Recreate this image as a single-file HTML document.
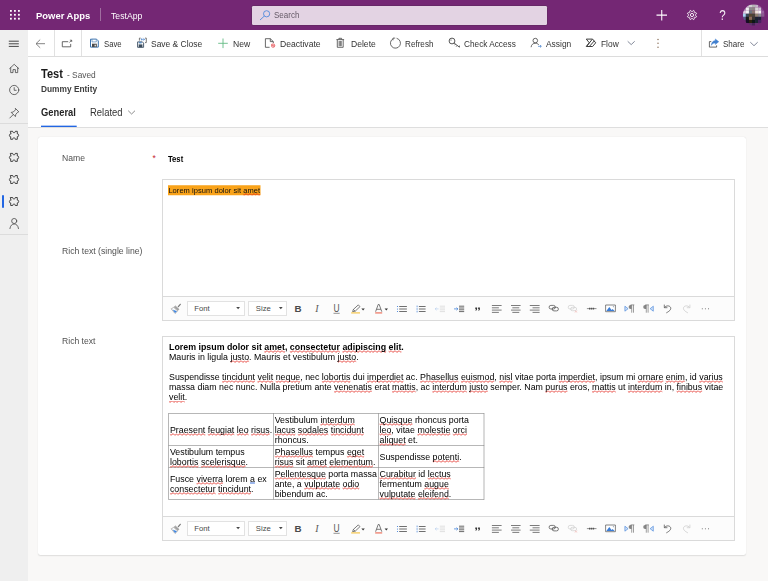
<!DOCTYPE html>
<html lang="en"><head><meta charset="utf-8"><title>Test - Power Apps</title>
<style>
html,body{margin:0;padding:0;}
body{width:768px;height:581px;overflow:hidden;position:relative;background:#f9f8f7;font-family:"Liberation Sans",sans-serif;}
.abs{position:absolute;}
.tx{position:absolute;white-space:pre;transform-origin:0 50%;}
svg{position:absolute;overflow:visible;}
#top{position:absolute;left:0;top:0;width:768px;height:30px;background:#742774;}
#searchbox{position:absolute;left:251.6px;top:5.5px;width:295.5px;height:19.1px;background:#e3d3e3;border-radius:1.2px;box-shadow:0 0 0 0.5px rgba(70,40,70,.55);}
#side{position:absolute;left:0;top:30px;width:27.6px;height:551px;background:#efefef;}
#cmd{position:absolute;left:27.6px;top:30px;width:740.4px;height:26.2px;background:#fff;border-bottom:0.7px solid #dcdcdc;}
.vd{position:absolute;top:30px;height:26.2px;width:0.7px;background:#e1e1e1;}
#hdr{position:absolute;left:27.6px;top:56.9px;width:740.4px;height:70.3px;background:#fff;border-bottom:0.7px solid #dedede;}
#card{position:absolute;left:37.5px;top:137px;width:708.8px;height:418px;background:#fff;border-radius:2.5px;box-shadow:0 0.4px 1.4px rgba(0,0,0,.11),0 0 0.6px rgba(0,0,0,.07);}
.ed{position:absolute;left:162px;width:573px;border:1px solid #dadada;background:#fff;box-sizing:border-box;}
.tb{position:absolute;left:0;bottom:0;width:100%;height:24px;background:#fcfcfc;border-top:1px solid #dadada;box-sizing:border-box;}
.combo{position:absolute;top:4px;height:15px;box-sizing:border-box;border:1px solid #e2e2e2;background:#fff;font-size:7.7px;line-height:13px;color:#484848;}
.xk{transform:scale(0.25000);transform-origin:0 0;}
.rt{font-family:"Liberation Sans",sans-serif;font-size:35.36px;line-height:40.24px;color:#000;white-space:nowrap;}
.rt p{margin:0;}
.rt table{border-collapse:collapse;margin:0;table-layout:fixed;}
.rt td{border:2.6px solid #6e6e6e;padding:4.08px 2.52px 1.08px 4.12px;vertical-align:middle;}
.sq{text-decoration:underline wavy #e01b10;text-decoration-thickness:3.49px;text-underline-offset:2px;text-decoration-skip-ink:none;}
.gq{text-decoration:underline double #3b6fd9;text-decoration-thickness:2px;text-underline-offset:3.2px;text-decoration-skip-ink:none;}

#pa{left:35.8px;top:10.33px;font-size:9.7px;line-height:12.61px;font-weight:700;color:#fff;transform:scaleX(0.9744);}
#ta{left:110.7px;top:11.43px;font-size:8.6px;line-height:11.18px;font-weight:400;color:#fff;transform:scaleX(1.0076);}
#se{left:274.2px;top:10.43px;font-size:8.6px;line-height:11.18px;font-weight:400;color:#655a67;transform:scaleX(0.9363);}
#c1{left:103.7px;top:39.43px;font-size:8.6px;line-height:11.18px;font-weight:400;color:#333;transform:scaleX(0.8982);}
#c2{left:151.3px;top:39.43px;font-size:8.6px;line-height:11.18px;font-weight:400;color:#333;transform:scaleX(0.9831);}
#c3{left:232.5px;top:39.43px;font-size:8.6px;line-height:11.18px;font-weight:400;color:#333;transform:scaleX(0.9998);}
#c4{left:279.7px;top:39.43px;font-size:8.6px;line-height:11.18px;font-weight:400;color:#333;transform:scaleX(0.9998);}
#c5{left:350.5px;top:39.43px;font-size:8.6px;line-height:11.18px;font-weight:400;color:#333;transform:scaleX(0.9982);}
#c6{left:405.3px;top:39.43px;font-size:8.6px;line-height:11.18px;font-weight:400;color:#333;transform:scaleX(0.9470);}
#c7{left:463.7px;top:39.43px;font-size:8.6px;line-height:11.18px;font-weight:400;color:#333;transform:scaleX(0.9595);}
#c8{left:545.5px;top:39.43px;font-size:8.6px;line-height:11.18px;font-weight:400;color:#333;transform:scaleX(0.9807);}
#c9{left:600.8px;top:39.43px;font-size:8.6px;line-height:11.18px;font-weight:400;color:#333;transform:scaleX(0.9749);}
#c10{left:722.8px;top:39.43px;font-size:8.6px;line-height:11.18px;font-weight:400;color:#333;transform:scaleX(0.9330);}
#h1{left:40.8px;top:67.14px;font-size:11.9px;line-height:15.47px;font-weight:700;color:#1b1b1b;transform:scaleX(0.9288);}
#h2{left:67.0px;top:70.43px;font-size:8.6px;line-height:11.18px;font-weight:400;color:#555;transform:scaleX(0.9688);}
#h3{left:41.2px;top:84.43px;font-size:8.6px;line-height:11.18px;font-weight:700;color:#3d3d3d;transform:scaleX(0.9709);}
#t1{left:41.2px;top:106.03px;font-size:10px;line-height:13.0px;font-weight:700;color:#262626;transform:scaleX(0.9369);}
#t2{left:89.5px;top:106.03px;font-size:10px;line-height:13.0px;font-weight:400;color:#333;transform:scaleX(0.9429);}
#l1{left:61.5px;top:153.43px;font-size:8.6px;line-height:11.18px;font-weight:400;color:#505050;transform:scaleX(1.0027);}
#v1{left:168.0px;top:154.43px;font-size:8.6px;line-height:11.18px;font-weight:700;color:#000;transform:scaleX(0.8917);}
#l2{left:61.5px;top:246.43px;font-size:8.6px;line-height:11.18px;font-weight:400;color:#505050;transform:scaleX(1.0080);}
#l3{left:61.5px;top:336.43px;font-size:8.6px;line-height:11.18px;font-weight:400;color:#505050;transform:scaleX(1.0019);}
</style></head>
<body>
<div id="top">
  <svg style="left:10px;top:10.2px" width="10" height="10" viewBox="0 0 10 10" fill="#fff"><rect x="0" y="0" width="1.8" height="1.8"/><rect x="4" y="0" width="1.8" height="1.8"/><rect x="8" y="0" width="1.8" height="1.8"/><rect x="0" y="3.9" width="1.8" height="1.8"/><rect x="4" y="3.9" width="1.8" height="1.8"/><rect x="8" y="3.9" width="1.8" height="1.8"/><rect x="0" y="7.8" width="1.8" height="1.8"/><rect x="4" y="7.8" width="1.8" height="1.8"/><rect x="8" y="7.8" width="1.8" height="1.8"/></svg>
  <div class="abs" style="left:100px;top:8.3px;width:0.7px;height:12.5px;background:#a06ea0"></div>
  <div id="searchbox"></div>
  <svg style="left:258px;top:9px" width="13" height="13" viewBox="258 9 13 13" fill="none" stroke="#4685dc" stroke-width="0.85"><circle cx="266.6" cy="13.8" r="3.1"/><path d="M264.4 16 L260 20"/></svg>
  <svg style="left:655px;top:8px" width="14" height="14" viewBox="655 8 14 14" stroke="#fff" stroke-width="1.05" fill="none"><path d="M656.5 15.1H667M661.75 9.9V20.4"/></svg>
  <svg style="left:685.1px;top:8.1px" width="14" height="14" viewBox="-7 -7 14 14" stroke="#fff" fill="none" stroke-linejoin="round"><path d="M4.39 1.82L4.31 1.99L4.21 2.15L4.07 2.28L3.81 2.34L3.37 2.25L2.93 2.13L2.70 2.13L2.56 2.19L2.46 2.28L2.37 2.37L2.28 2.46L2.19 2.56L2.13 2.70L2.13 2.93L2.25 3.37L2.34 3.81L2.28 4.07L2.15 4.21L1.99 4.31L1.82 4.39L1.64 4.45L1.46 4.50L1.27 4.49L1.04 4.35L0.79 3.97L0.57 3.58L0.40 3.41L0.26 3.36L0.13 3.35L0.00 3.35L-0.13 3.35L-0.26 3.36L-0.40 3.41L-0.57 3.58L-0.79 3.97L-1.04 4.35L-1.27 4.49L-1.46 4.50L-1.64 4.45L-1.82 4.39L-1.99 4.31L-2.15 4.21L-2.28 4.07L-2.34 3.81L-2.25 3.37L-2.13 2.93L-2.13 2.70L-2.19 2.56L-2.28 2.46L-2.37 2.37L-2.46 2.28L-2.56 2.19L-2.70 2.13L-2.93 2.13L-3.37 2.25L-3.81 2.34L-4.07 2.28L-4.21 2.15L-4.31 1.99L-4.39 1.82L-4.45 1.64L-4.50 1.46L-4.49 1.27L-4.35 1.04L-3.97 0.79L-3.58 0.57L-3.41 0.40L-3.36 0.26L-3.35 0.13L-3.35 0.00L-3.35 -0.13L-3.36 -0.26L-3.41 -0.40L-3.58 -0.57L-3.97 -0.79L-4.35 -1.04L-4.49 -1.27L-4.50 -1.46L-4.45 -1.64L-4.39 -1.82L-4.31 -1.99L-4.21 -2.15L-4.07 -2.28L-3.81 -2.34L-3.37 -2.25L-2.93 -2.13L-2.70 -2.13L-2.56 -2.19L-2.46 -2.28L-2.37 -2.37L-2.28 -2.46L-2.19 -2.56L-2.13 -2.70L-2.13 -2.93L-2.25 -3.37L-2.34 -3.81L-2.28 -4.07L-2.15 -4.21L-1.99 -4.31L-1.82 -4.39L-1.64 -4.45L-1.46 -4.50L-1.27 -4.49L-1.04 -4.35L-0.79 -3.97L-0.57 -3.58L-0.40 -3.41L-0.26 -3.36L-0.13 -3.35L-0.00 -3.35L0.13 -3.35L0.26 -3.36L0.40 -3.41L0.57 -3.58L0.79 -3.97L1.04 -4.35L1.27 -4.49L1.46 -4.50L1.64 -4.45L1.82 -4.39L1.99 -4.31L2.15 -4.21L2.28 -4.07L2.34 -3.81L2.25 -3.37L2.13 -2.93L2.13 -2.70L2.19 -2.56L2.28 -2.46L2.37 -2.37L2.46 -2.28L2.56 -2.19L2.70 -2.13L2.93 -2.13L3.37 -2.25L3.81 -2.34L4.07 -2.28L4.21 -2.15L4.31 -1.99L4.39 -1.82L4.45 -1.64L4.50 -1.46L4.49 -1.27L4.35 -1.04L3.97 -0.79L3.58 -0.57L3.41 -0.40L3.36 -0.26L3.35 -0.13L3.35 -0.00L3.35 0.13L3.36 0.26L3.41 0.40L3.58 0.57L3.97 0.79L4.35 1.04L4.49 1.27L4.50 1.46L4.45 1.64Z" stroke-width="1"/><circle r="1.6" stroke-width="0.9"/></svg>
  <span class="abs" style="left:717.6px;top:6.9px;font-size:14.2px;line-height:16px;color:rgba(255,255,255,.93);width:9px;text-align:center;transform:scaleX(0.82)">?</span>
  <svg style="left:742px;top:4px" width="23" height="22" viewBox="742 4 23 22"><defs><clipPath id="av"><ellipse cx="753.8" cy="14.9" rx="11" ry="10.6"/></clipPath><filter id="bl"><feGaussianBlur stdDeviation="0.5"/></filter></defs><g clip-path="url(#av)" filter="url(#bl)"><rect x="745.8" y="4.4" width="3.2" height="3.2" fill="#c9b0cc"/><rect x="748.9" y="4.4" width="3.2" height="3.2" fill="#cfcfcf"/><rect x="752.0" y="4.4" width="3.2" height="3.2" fill="#b5b5b5"/><rect x="755.1" y="4.4" width="3.2" height="3.2" fill="#c4b4c8"/><rect x="758.2" y="4.4" width="3.2" height="3.2" fill="#9a5c9c"/><rect x="742.7" y="7.5" width="3.2" height="3.2" fill="#a880ac"/><rect x="745.8" y="7.5" width="3.2" height="3.2" fill="#f0eef2"/><rect x="748.9" y="7.5" width="3.2" height="3.2" fill="#8a8a8c"/><rect x="752.0" y="7.5" width="3.2" height="3.2" fill="#8f8584"/><rect x="755.1" y="7.5" width="3.2" height="3.2" fill="#d8d4d6"/><rect x="758.2" y="7.5" width="3.2" height="3.2" fill="#d0c0d4"/><rect x="761.3" y="7.5" width="3.2" height="3.2" fill="#82408a"/><rect x="742.7" y="10.6" width="3.2" height="3.2" fill="#e0d0e4"/><rect x="745.8" y="10.6" width="3.2" height="3.2" fill="#f4f4f6"/><rect x="748.9" y="10.6" width="3.2" height="3.2" fill="#6c7480"/><rect x="752.0" y="10.6" width="3.2" height="3.2" fill="#8b7570"/><rect x="755.1" y="10.6" width="3.2" height="3.2" fill="#f0e4dc"/><rect x="758.2" y="10.6" width="3.2" height="3.2" fill="#f8f6f6"/><rect x="761.3" y="10.6" width="3.2" height="3.2" fill="#9a60a0"/><rect x="742.7" y="13.7" width="3.2" height="3.2" fill="#a8d4f0"/><rect x="745.8" y="13.7" width="3.2" height="3.2" fill="#3a4a58"/><rect x="748.9" y="13.7" width="3.2" height="3.2" fill="#54452f"/><rect x="752.0" y="13.7" width="3.2" height="3.2" fill="#4a4238"/><rect x="755.1" y="13.7" width="3.2" height="3.2" fill="#8f8270"/><rect x="758.2" y="13.7" width="3.2" height="3.2" fill="#8a8c90"/><rect x="761.3" y="13.7" width="3.2" height="3.2" fill="#8a5a90"/><rect x="742.7" y="16.8" width="3.2" height="3.2" fill="#5a5a88"/><rect x="745.8" y="16.8" width="3.2" height="3.2" fill="#141a18"/><rect x="748.9" y="16.8" width="3.2" height="3.2" fill="#8a6a58"/><rect x="752.0" y="16.8" width="3.2" height="3.2" fill="#3a3630"/><rect x="755.1" y="16.8" width="3.2" height="3.2" fill="#1a2230"/><rect x="758.2" y="16.8" width="3.2" height="3.2" fill="#1c2434"/><rect x="761.3" y="16.8" width="3.2" height="3.2" fill="#6a2a70"/><rect x="742.7" y="19.9" width="3.2" height="3.2" fill="#6a2a70"/><rect x="745.8" y="19.9" width="3.2" height="3.2" fill="#180a28"/><rect x="748.9" y="19.9" width="3.2" height="3.2" fill="#2a2010"/><rect x="752.0" y="19.9" width="3.2" height="3.2" fill="#0c1418"/><rect x="755.1" y="19.9" width="3.2" height="3.2" fill="#1a2430"/><rect x="758.2" y="19.9" width="3.2" height="3.2" fill="#4a2460"/><rect x="745.8" y="23.0" width="3.2" height="3.2" fill="#6a2a70"/><rect x="748.9" y="23.0" width="3.2" height="3.2" fill="#5a3068"/><rect x="752.0" y="23.0" width="3.2" height="3.2" fill="#4a2058"/><rect x="755.1" y="23.0" width="3.2" height="3.2" fill="#6a3070"/></g></svg>
</div>

<div id="side">
  <div class="abs" style="left:0;top:93.2px;width:27.6px;height:0.7px;background:#dcdcdc"></div>
  <div class="abs" style="left:0;top:204px;width:27.6px;height:0.7px;background:#dcdcdc"></div>
  <div class="abs" style="left:2.3px;top:164.6px;width:2.2px;height:13.4px;background:#2266e3;border-radius:1px"></div>
</div>
<!-- sidebar icons (global coords) -->
<svg style="left:0;top:30px" width="28" height="220" viewBox="0 30 28 220" fill="none" stroke="#484848" stroke-width="0.8" stroke-linejoin="round" stroke-linecap="round">
  <path d="M8.8 41.2H18.8M8.8 43.8H18.8M8.8 46.4H18.8" stroke-linecap="butt" stroke="#333" stroke-width="0.9"/>
  <!-- home -->
  <path d="M9.6 68.6 L14.2 64.3 L18.8 68.6 M10.7 67.8 V72.6 H13 V69.6 H15.4 V72.6 H17.7 V67.8"/>
  <!-- clock -->
  <circle cx="14.2" cy="90" r="4.6"/><path d="M14.2 87.6V90.3H16.2"/>
  <!-- pin -->
  <path d="M15.6 108.6 L18.8 111.8 L17.6 112.3 L15.8 114.4 L15.4 116.6 L11.2 112.4 L13.3 112 L15.3 110 Z M13.2 114.6 L9.8 118"/>
  <!-- puzzles -->
  <g id="pz"><path transform="translate(14 135.3)" d="M-3.3 -4H-1.3C-1.8 -2.2 1.8 -2.2 1.3 -4H3.3V-1.4C5.1 -2.1 5.1 2.1 3.3 1.4V4H1.3C1.8 2.2 -1.8 2.2 -1.3 4H-3.3V1.4C-5.1 2.1 -5.1 -2.1 -3.3 -1.4Z" stroke="#333" stroke-width="0.9"/><path transform="translate(14 157.4)" d="M-3.3 -4H-1.3C-1.8 -2.2 1.8 -2.2 1.3 -4H3.3V-1.4C5.1 -2.1 5.1 2.1 3.3 1.4V4H1.3C1.8 2.2 -1.8 2.2 -1.3 4H-3.3V1.4C-5.1 2.1 -5.1 -2.1 -3.3 -1.4Z" stroke="#333" stroke-width="0.9"/><path transform="translate(14 179.5)" d="M-3.3 -4H-1.3C-1.8 -2.2 1.8 -2.2 1.3 -4H3.3V-1.4C5.1 -2.1 5.1 2.1 3.3 1.4V4H1.3C1.8 2.2 -1.8 2.2 -1.3 4H-3.3V1.4C-5.1 2.1 -5.1 -2.1 -3.3 -1.4Z" stroke="#333" stroke-width="0.9"/><path transform="translate(14 201.5)" d="M-3.3 -4H-1.3C-1.8 -2.2 1.8 -2.2 1.3 -4H3.3V-1.4C5.1 -2.1 5.1 2.1 3.3 1.4V4H1.3C1.8 2.2 -1.8 2.2 -1.3 4H-3.3V1.4C-5.1 2.1 -5.1 -2.1 -3.3 -1.4Z" stroke="#333" stroke-width="0.9"/></g>
  <!-- person -->
  <circle cx="14.2" cy="221" r="2.55"/><path d="M9.9 228.6 C10.3 225.4 12.2 224 14.2 224 C16.2 224 18.1 225.4 18.5 228.6"/>
</svg>

<div id="cmd"></div>
<div class="vd" style="left:53.6px"></div>
<div class="vd" style="left:81.2px"></div>
<div class="vd" style="left:701px"></div>
<!-- command bar icons (global coords) -->
<svg style="left:28px;top:30px" width="740" height="26" viewBox="28 30 740 26" fill="none" stroke="#444" stroke-width="0.8" stroke-linejoin="round">
  <!-- back -->
  <path d="M45 43.7H36.2M40.2 39.6L36 43.7L40.2 47.8" stroke="#666"/>
  <!-- popout -->
  <path d="M68.2 41.7H62.3V46.8H70.7V43.9" stroke="#444"/><path d="M69.3 42.6L71.6 40.3M69.9 40.2H71.7V42" stroke="#444" stroke-width="0.7"/>
  <!-- save -->
  <path d="M90.5 39.2H96.6L98.3 40.9V47.1H90.5Z" stroke="#3a72ad" stroke-width="1" fill="#fff"/><rect x="92" y="39.3" width="4.3" height="2.6" fill="#fff" stroke="#3a72ad" stroke-width="0.6"/><rect x="92" y="43.7" width="4.8" height="3.4" fill="#4a4a4a" stroke="none"/><rect x="94.6" y="44.7" width="1.2" height="1.7" fill="#fff" stroke="none"/>
  <!-- save & close -->
  <path d="M137.6 41.9H142.4L143.6 43.1V47.3H137.6Z" stroke="#3a4e63" stroke-width="0.9" fill="#fff"/><rect x="138.7" y="44.4" width="3.7" height="2.9" fill="#3c4c5c" stroke="none"/><rect x="138.9" y="41.9" width="2.8" height="1.5" fill="#5b8fc4" stroke="none"/>
  <path d="M140.6 38.1H139.4V40.6M145 38.1H146.3V42.6H145" stroke="#444" stroke-width="0.7"/><path d="M141 39.4H144.6M143.4 38.3L144.7 39.4L143.4 40.5M142.2 38.3L140.9 39.4L142.2 40.5" stroke="#3a78c8" stroke-width="0.6"/>
  <!-- new -->
  <path d="M218.2 43.3H227.8M223 38.5V48.1" stroke="#63bb85" stroke-width="0.9"/>
  <!-- deactivate -->
  <path d="M270.3 38.7H265.4V47.3H269.6M270.3 38.7L273.3 41.6V43M270.3 38.7V41.6H273.3" stroke="#484848" stroke-width="0.82"/><circle cx="273.1" cy="45.6" r="2.1" fill="#e5484d" stroke="none"/><path d="M271.9 46.8L274.3 44.4" stroke="#fff" stroke-width="0.5"/><circle cx="273.1" cy="45.6" r="1.25" stroke="#fff" stroke-width="0.45"/>
  <!-- delete -->
  <path d="M336.4 39.6H344.1M338.9 39.4V38.3H341.6V39.4M337.3 39.8V47.3H343.2V39.8" stroke="#444" stroke-width="0.8"/><rect x="338.5" y="40.9" width="3.5" height="5.3" fill="#9a9a9a" stroke="none"/><path d="M340.25 40.9V46.2" stroke="#555" stroke-width="0.5"/>
  <!-- refresh -->
  <path d="M393.2 38.7 A5 5 0 1 0 396.6 38.3" stroke="#444" stroke-width="0.8"/><path d="M395.2 38.1H393V40.3" stroke="#444" stroke-width="0.75"/>
  <!-- key -->
  <circle cx="452" cy="41" r="2.9" stroke="#444" stroke-width="0.9"/><circle cx="451" cy="40" r="0.55" fill="#444" stroke="none"/><path d="M453.9 42.8L459.4 47.2V45.6M457.2 45.4L456.2 46.6M455.5 44.1L454.6 45.2" stroke="#444" stroke-width="0.85"/>
  <!-- assign -->
  <circle cx="535.3" cy="40.6" r="2.3" stroke="#444"/><path d="M531.1 47.2C531.3 44.6 533.2 43.2 535.3 43.2C536.8 43.2 538 43.8 538.8 44.9" stroke="#444"/><path d="M538 46.3H541.2M540 45.1L541.3 46.3L540 47.5" stroke="#3a78c8" stroke-width="0.7"/>
  <!-- flow -->
  <path d="M586.3 39.1H592.6L595.7 42.8L592.6 46.5H586.3L589.3 42.8Z" stroke="#333" stroke-width="0.95"/><path d="M586.6 46.3L592.2 39.4M589.5 46.3L594.4 40.8" stroke="#333" stroke-width="0.95"/>
  <path d="M627.7 41.3L631.2 44.6L634.7 41.3" stroke="#6b7386" stroke-width="0.85"/>
  <!-- more -->
  <g fill="#8e745e" stroke="none"><circle cx="658" cy="39.4" r="0.75"/><circle cx="658" cy="43.3" r="0.75"/><circle cx="658" cy="47.2" r="0.75"/></g>
  <!-- share -->
  <path d="M711.3 41.6H709.4V47.1H716.6V45.4" stroke="#444" stroke-width="0.8"/><path d="M715.3 38.9L718.8 41.7L715.3 44.5V42.9C713.4 42.9 712.1 43.7 711.3 45.4C711.4 42.5 712.9 40.7 715.3 40.5Z" fill="#3f7fcf" stroke="#3f7fcf" stroke-width="0.4"/>
  <path d="M750.3 42.2L754 45.7L757.7 42.2" stroke="#6b7386" stroke-width="0.85"/>
</svg>

<div id="hdr"></div>
<svg style="left:40px;top:124px" width="40" height="4" viewBox="40 124 40 4"><rect x="41" y="125.65" width="35.7" height="1.35" fill="#2266e3"/></svg>
<svg style="left:127px;top:109px" width="10" height="7" viewBox="127 109 10 7" fill="none" stroke="#666" stroke-width="0.75"><path d="M128.2 110.7L131.6 114L135 110.7"/></svg>

<div id="card"></div>
<span class="abs" style="left:152.6px;top:152.7px;font-size:8.5px;line-height:10px;color:#c4262e">*</span>

<span class="tx" id="pa">Power Apps</span>
<span class="tx" id="ta">TestApp</span>
<span class="tx" id="se">Search</span>
<span class="tx" id="c1">Save</span>
<span class="tx" id="c2">Save &amp; Close</span>
<span class="tx" id="c3">New</span>
<span class="tx" id="c4">Deactivate</span>
<span class="tx" id="c5">Delete</span>
<span class="tx" id="c6">Refresh</span>
<span class="tx" id="c7">Check Access</span>
<span class="tx" id="c8">Assign</span>
<span class="tx" id="c9">Flow</span>
<span class="tx" id="c10">Share</span>
<span class="tx" id="h1">Test</span>
<span class="tx" id="h2">- Saved</span>
<span class="tx" id="h3">Dummy Entity</span>
<span class="tx" id="t1">General</span>
<span class="tx" id="t2">Related</span>
<span class="tx" id="l1">Name</span>
<span class="tx" id="v1">Test</span>
<span class="tx" id="l2">Rich text (single line)</span>
<span class="tx" id="l3">Rich text</span>

<div class="ed" style="top:179px;height:142px">
  <div class="abs xk" style="left:5.2px;top:4.7px;font-size:30px;line-height:40px;white-space:pre;color:#111"><span id="hl" style="background:#f9a31a;display:inline-block;height:40px;line-height:38.8px;padding:0 1.6px;letter-spacing:0.2px">Lorem ipsum dolor sit <span class="sq">amet</span></span></div>
  <div class="tb"><div class="combo" style="left:24px;width:58px;padding-left:6.3px">Font</div><div class="combo" style="left:85px;width:39px;padding-left:6.8px">Size</div><svg style="left:0;top:0" width="570" height="23" viewBox="163 297 570 23" fill="none" stroke="#4a4a4a" stroke-width="0.8" stroke-linejoin="round"><path d="M180.3 304.3L178.3 306.6" stroke="#777" stroke-width="1.2" stroke-linecap="round"/><path d="M175.4 305.9L179 309.3L177.9 310.5L174.2 307Z" fill="#a5a5a5" stroke="#808080" stroke-width="0.5"/><path d="M173.8 307.4L177.6 311L175 313.5L171.2 308.8Z" fill="#fff" stroke="#8a8a8a" stroke-width="0.6"/><path d="M172.6 309.4L177 311.3L175 313.1Z" fill="#3f86e0" stroke="none"/><text x="298.1" y="312.1" text-anchor="middle" font-family="Liberation Sans, sans-serif" font-weight="700" font-size="9.8" fill="#4a4a4a" stroke="none">B</text><text x="317" y="312.1" text-anchor="middle" font-family="Liberation Serif, serif" font-style="italic" font-size="10" fill="#5a5a5a" stroke="none">I</text><text x="336.6" y="312" text-anchor="middle" font-family="Liberation Sans, sans-serif" font-size="10" fill="#555" stroke="none" textLength="6.1" lengthAdjust="spacingAndGlyphs">U</text><path d="M333.5 313.3H339.7" stroke="#666" stroke-width="0.7"/><path d="M358.3 304.9L360 306.6L355.2 311.2L352.6 311.6L353.4 309.4Z" stroke="#444" stroke-width="0.7"/><path d="M353.4 309.4L355.2 311.2" stroke="#444" stroke-width="0.6"/><rect x="351.2" y="312.3" width="8.8" height="1.2" fill="#f6c64c" stroke="none"/><path d="M361.40000000000003 308.40000000000003H364.8L363.1 310.40000000000003Z" fill="#333" stroke="none"/><path d="M375.6 311.7L378.2 304.5H379.2L381.8 311.7M376.6 309.3H380.8" stroke="#444" stroke-width="0.7"/><rect x="375.2" y="312.2" width="7" height="1.4" fill="#ee8574" stroke="none"/><path d="M384.6 308.40000000000003H388.0L386.3 310.40000000000003Z" fill="#333" stroke="none"/><path d="M399.20 306.5H406.90M399.20 309H406.90M399.20 311.5H406.90" stroke="#4a4a4a" stroke-width="0.8"/><g fill="#3b7dd8" stroke="none"><circle cx="397.5" cy="306.5" r="0.55"/><circle cx="397.5" cy="309" r="0.55"/><circle cx="397.5" cy="311.5" r="0.55"/></g><path d="M418.90 306.5H425.60M418.90 309H425.60M418.90 311.5H425.60" stroke="#4a4a4a" stroke-width="0.8"/><path d="M417.1 305.6V307.3M417.1 308.2V309.8M417.1 310.7V312.4" stroke="#3b7dd8" stroke-width="0.7"/><path d="M439.80 306.2H445.00M439.80 308H445.00M439.80 309.8H445.00M439.80 311.6H445.00" stroke="#d9d9d9" stroke-width="0.8"/><path d="M438.6 308.9H435.2M436.5 307.6L435.1 308.9L436.5 310.2" stroke="#b9d0ee" stroke-width="0.7"/><path d="M459.00 306.2H464.20M459.00 308H464.20M459.00 309.8H464.20M459.00 311.6H464.20" stroke="#444" stroke-width="0.8"/><path d="M454 308.9H457.8M456.5 307.6L457.9 308.9L456.5 310.2" stroke="#3b7dd8" stroke-width="0.75"/><g fill="#333" stroke="none"><path d="M475.3 307.4H477.1V309.1C477.1 310.1 476.5 310.7 475.5 310.8V310.1C476 310 476.2 309.7 476.2 309.2H475.3Z"/><path d="M478.1 307.4H479.9V309.1C479.9 310.1 479.3 310.7 478.3 310.8V310.1C478.8 310 479 309.7 479 309.2H478.1Z"/></g><path d="M491.90 305.5H501.60M491.90 307.8H498.88M491.90 310.1H501.60M491.90 312.4H498.88" stroke="#5a5a5a" stroke-width="0.8"/><path d="M511.00 305.5H520.60M512.34 307.8H519.26M511.00 310.1H520.60M512.34 312.4H519.26" stroke="#5a5a5a" stroke-width="0.8"/><path d="M529.80 305.5H539.60M532.54 307.8H539.60M529.80 310.1H539.60M532.54 312.4H539.60" stroke="#5a5a5a" stroke-width="0.8"/><rect x="549.1" y="305.4" width="6.2" height="3.6" rx="1.8" stroke="#444" stroke-width="0.7"/><rect x="552.2" y="307.3" width="6.2" height="3.6" rx="1.8" stroke="#444" stroke-width="0.7"/><rect x="568.2" y="305.4" width="6.2" height="3.6" rx="1.8" stroke="#cfcfcf" stroke-width="0.7"/><rect x="570.6" y="307.3" width="6" height="3.4" rx="1.7" stroke="#cfcfcf" stroke-width="0.7"/><path d="M575 310.6L576.9 312.5M576.9 310.6L575 312.5" stroke="#f0a9a4" stroke-width="0.6"/><path d="M586.9 308.6H596.5" stroke="#666" stroke-width="0.7"/><path d="M589 308.6H594.4" stroke="#555" stroke-width="1.8" stroke-dasharray="1.3 0.6"/><rect x="605.6" y="305" width="9.8" height="6.7" stroke="#666" stroke-width="0.8" fill="#fff"/><path d="M606.3 311.1L609.3 307.1L611.6 310L612.6 309.1L614.6 311.1Z" fill="#3b7dd8" stroke="none"/><circle cx="613.4" cy="306.7" r="0.6" fill="#9ab" stroke="none"/><path d="M631.6 304.9H630.6A2 2 0 0 0 630.6 308.9H631.6Z" fill="#858585" stroke="none"/><path d="M631.7 304.9V312.7M633.5 304.9V312.7M630.6 304.9H634.3000000000001" stroke="#777" stroke-width="0.7"/><path d="M624.9 306.2V311.2L628.1 308.7Z" stroke="#3b7dd8" stroke-width="0.6" fill="#cfe0f7"/><path d="M646.2 304.9H645.2A2 2 0 0 0 645.2 308.9H646.2Z" fill="#858585" stroke="none"/><path d="M646.3000000000001 304.9V312.7M648.1 304.9V312.7M645.2 304.9H648.9000000000001" stroke="#777" stroke-width="0.7"/><path d="M653.3 306.2V311.2L650.1 308.7Z" stroke="#3b7dd8" stroke-width="0.6" fill="#cfe0f7"/><path d="M664.3 304.6V307.7H667.4" stroke="#505050" stroke-width="0.75"/><path d="M664.5 307.5C666.2 305.4 669.6 305.3 670.6 307.5C671.4 309.6 669.2 311.3 666.3 312.9" stroke="#505050" stroke-width="0.78"/><path d="M689.9 304.6V307.7H686.8" stroke="#cfcfcf" stroke-width="0.8"/><path d="M689.7 307.5C688 305.4 684.6 305.3 683.6 307.5C682.8 309.6 685 311.3 687.9 312.9" stroke="#cfcfcf" stroke-width="0.85"/><g fill="#666" stroke="none"><circle cx="702.3" cy="308.7" r="0.55"/><circle cx="705.4" cy="308.7" r="0.55"/><circle cx="708.5" cy="308.7" r="0.55"/></g><path d="M236.2 307.1H240L238.1 309.3Z" fill="#484848" stroke="none"/><path d="M278.9 307.1H282.7L280.8 309.3Z" fill="#484848" stroke="none"/></svg></div>
</div>

<div class="ed" style="top:336px;height:205px">
  <div class="abs rt xk" style="left:6px;top:5.1px;width:2248px">
    <p><b>Lorem ipsum dolor sit <span class="sq">amet</span>, <span class="sq">consectetur</span> <span class="sq">adipiscing</span> <span class="sq">elit</span>.</b><br>Mauris in ligula <span class="sq">justo</span>. Mauris et vestibulum <span class="sq">justo</span>.</p>
    <p style="margin-top:40.24px">Suspendisse <span class="sq">tincidunt</span> <span class="sq">velit</span> <span class="sq">neque</span>, nec <span class="sq">lobortis</span> dui <span class="sq">imperdiet</span> ac. <span class="sq">Phasellus</span> <span class="sq">euismod</span>, <span class="sq">nisl</span> vitae porta <span class="sq">imperdiet</span>, ipsum mi <span class="sq">ornare</span> <span class="sq">enim</span>, id <span class="sq">varius</span><br>massa diam nec nunc. Nulla pretium ante <span class="sq">venenatis</span> erat <span class="sq">mattis</span>, ac <span class="sq">interdum</span> <span class="sq">justo</span> semper. Nam <span class="sq">purus</span> eros, <span class="sq">mattis</span> ut <span class="sq">interdum</span> in, <span class="sq">finibus</span> vitae<br><span class="sq">velit</span>.</p>
    <table style="margin-top:43.48px;margin-left:-2.4px;width:1263.2px">
      <tr><td style="width:410.4px"><span class="sq">Praesent</span> <span class="sq">feugiat</span> <span class="sq">leo</span> <span class="sq">risus</span>.</td><td style="width:410.8px">Vestibulum <span class="sq">interdum</span><br><span class="sq">lacus</span> <span class="sq">sodales</span> <span class="sq">tincidunt</span><br>rhoncus.</td><td><span class="sq">Quisque</span> rhoncus porta<br><span class="sq">leo</span>, vitae <span class="sq">molestie</span> <span class="sq">orci</span><br><span class="sq">aliquet</span> et.</td></tr>
      <tr><td>Vestibulum tempus<br><span class="sq">lobortis</span> <span class="sq">scelerisque</span>.</td><td><span class="sq">Phasellus</span> tempus <span class="sq">eget</span><br><span class="sq">risus</span> sit <span class="sq">amet</span> <span class="sq">elementum</span>.</td><td>Suspendisse <span class="sq">potenti</span>.</td></tr>
      <tr><td>Fusce <span class="sq">viverra</span> lorem <span class="gq">a</span> ex<br><span class="sq">consectetur</span> <span class="sq">tincidunt</span>.</td><td><span class="sq">Pellentesque</span> porta massa<br>ante, a <span class="sq">vulputate</span> <span class="sq">odio</span><br>bibendum ac.</td><td><span class="sq">Curabitur</span> id <span class="sq">lectus</span><br>fermentum <span class="sq">augue</span><br><span class="sq">vulputate</span> <span class="sq">eleifend</span>.</td></tr>
    </table>
  </div>
  <div class="tb"><div class="combo" style="left:24px;width:58px;padding-left:6.3px">Font</div><div class="combo" style="left:85px;width:39px;padding-left:6.8px">Size</div><svg style="left:0;top:0" width="570" height="23" viewBox="163 297 570 23" fill="none" stroke="#4a4a4a" stroke-width="0.8" stroke-linejoin="round"><path d="M180.3 304.3L178.3 306.6" stroke="#777" stroke-width="1.2" stroke-linecap="round"/><path d="M175.4 305.9L179 309.3L177.9 310.5L174.2 307Z" fill="#a5a5a5" stroke="#808080" stroke-width="0.5"/><path d="M173.8 307.4L177.6 311L175 313.5L171.2 308.8Z" fill="#fff" stroke="#8a8a8a" stroke-width="0.6"/><path d="M172.6 309.4L177 311.3L175 313.1Z" fill="#3f86e0" stroke="none"/><text x="298.1" y="312.1" text-anchor="middle" font-family="Liberation Sans, sans-serif" font-weight="700" font-size="9.8" fill="#4a4a4a" stroke="none">B</text><text x="317" y="312.1" text-anchor="middle" font-family="Liberation Serif, serif" font-style="italic" font-size="10" fill="#5a5a5a" stroke="none">I</text><text x="336.6" y="312" text-anchor="middle" font-family="Liberation Sans, sans-serif" font-size="10" fill="#555" stroke="none" textLength="6.1" lengthAdjust="spacingAndGlyphs">U</text><path d="M333.5 313.3H339.7" stroke="#666" stroke-width="0.7"/><path d="M358.3 304.9L360 306.6L355.2 311.2L352.6 311.6L353.4 309.4Z" stroke="#444" stroke-width="0.7"/><path d="M353.4 309.4L355.2 311.2" stroke="#444" stroke-width="0.6"/><rect x="351.2" y="312.3" width="8.8" height="1.2" fill="#f6c64c" stroke="none"/><path d="M361.40000000000003 308.40000000000003H364.8L363.1 310.40000000000003Z" fill="#333" stroke="none"/><path d="M375.6 311.7L378.2 304.5H379.2L381.8 311.7M376.6 309.3H380.8" stroke="#444" stroke-width="0.7"/><rect x="375.2" y="312.2" width="7" height="1.4" fill="#ee8574" stroke="none"/><path d="M384.6 308.40000000000003H388.0L386.3 310.40000000000003Z" fill="#333" stroke="none"/><path d="M399.20 306.5H406.90M399.20 309H406.90M399.20 311.5H406.90" stroke="#4a4a4a" stroke-width="0.8"/><g fill="#3b7dd8" stroke="none"><circle cx="397.5" cy="306.5" r="0.55"/><circle cx="397.5" cy="309" r="0.55"/><circle cx="397.5" cy="311.5" r="0.55"/></g><path d="M418.90 306.5H425.60M418.90 309H425.60M418.90 311.5H425.60" stroke="#4a4a4a" stroke-width="0.8"/><path d="M417.1 305.6V307.3M417.1 308.2V309.8M417.1 310.7V312.4" stroke="#3b7dd8" stroke-width="0.7"/><path d="M439.80 306.2H445.00M439.80 308H445.00M439.80 309.8H445.00M439.80 311.6H445.00" stroke="#d9d9d9" stroke-width="0.8"/><path d="M438.6 308.9H435.2M436.5 307.6L435.1 308.9L436.5 310.2" stroke="#b9d0ee" stroke-width="0.7"/><path d="M459.00 306.2H464.20M459.00 308H464.20M459.00 309.8H464.20M459.00 311.6H464.20" stroke="#444" stroke-width="0.8"/><path d="M454 308.9H457.8M456.5 307.6L457.9 308.9L456.5 310.2" stroke="#3b7dd8" stroke-width="0.75"/><g fill="#333" stroke="none"><path d="M475.3 307.4H477.1V309.1C477.1 310.1 476.5 310.7 475.5 310.8V310.1C476 310 476.2 309.7 476.2 309.2H475.3Z"/><path d="M478.1 307.4H479.9V309.1C479.9 310.1 479.3 310.7 478.3 310.8V310.1C478.8 310 479 309.7 479 309.2H478.1Z"/></g><path d="M491.90 305.5H501.60M491.90 307.8H498.88M491.90 310.1H501.60M491.90 312.4H498.88" stroke="#5a5a5a" stroke-width="0.8"/><path d="M511.00 305.5H520.60M512.34 307.8H519.26M511.00 310.1H520.60M512.34 312.4H519.26" stroke="#5a5a5a" stroke-width="0.8"/><path d="M529.80 305.5H539.60M532.54 307.8H539.60M529.80 310.1H539.60M532.54 312.4H539.60" stroke="#5a5a5a" stroke-width="0.8"/><rect x="549.1" y="305.4" width="6.2" height="3.6" rx="1.8" stroke="#444" stroke-width="0.7"/><rect x="552.2" y="307.3" width="6.2" height="3.6" rx="1.8" stroke="#444" stroke-width="0.7"/><rect x="568.2" y="305.4" width="6.2" height="3.6" rx="1.8" stroke="#cfcfcf" stroke-width="0.7"/><rect x="570.6" y="307.3" width="6" height="3.4" rx="1.7" stroke="#cfcfcf" stroke-width="0.7"/><path d="M575 310.6L576.9 312.5M576.9 310.6L575 312.5" stroke="#f0a9a4" stroke-width="0.6"/><path d="M586.9 308.6H596.5" stroke="#666" stroke-width="0.7"/><path d="M589 308.6H594.4" stroke="#555" stroke-width="1.8" stroke-dasharray="1.3 0.6"/><rect x="605.6" y="305" width="9.8" height="6.7" stroke="#666" stroke-width="0.8" fill="#fff"/><path d="M606.3 311.1L609.3 307.1L611.6 310L612.6 309.1L614.6 311.1Z" fill="#3b7dd8" stroke="none"/><circle cx="613.4" cy="306.7" r="0.6" fill="#9ab" stroke="none"/><path d="M631.6 304.9H630.6A2 2 0 0 0 630.6 308.9H631.6Z" fill="#858585" stroke="none"/><path d="M631.7 304.9V312.7M633.5 304.9V312.7M630.6 304.9H634.3000000000001" stroke="#777" stroke-width="0.7"/><path d="M624.9 306.2V311.2L628.1 308.7Z" stroke="#3b7dd8" stroke-width="0.6" fill="#cfe0f7"/><path d="M646.2 304.9H645.2A2 2 0 0 0 645.2 308.9H646.2Z" fill="#858585" stroke="none"/><path d="M646.3000000000001 304.9V312.7M648.1 304.9V312.7M645.2 304.9H648.9000000000001" stroke="#777" stroke-width="0.7"/><path d="M653.3 306.2V311.2L650.1 308.7Z" stroke="#3b7dd8" stroke-width="0.6" fill="#cfe0f7"/><path d="M664.3 304.6V307.7H667.4" stroke="#505050" stroke-width="0.75"/><path d="M664.5 307.5C666.2 305.4 669.6 305.3 670.6 307.5C671.4 309.6 669.2 311.3 666.3 312.9" stroke="#505050" stroke-width="0.78"/><path d="M689.9 304.6V307.7H686.8" stroke="#cfcfcf" stroke-width="0.8"/><path d="M689.7 307.5C688 305.4 684.6 305.3 683.6 307.5C682.8 309.6 685 311.3 687.9 312.9" stroke="#cfcfcf" stroke-width="0.85"/><g fill="#666" stroke="none"><circle cx="702.3" cy="308.7" r="0.55"/><circle cx="705.4" cy="308.7" r="0.55"/><circle cx="708.5" cy="308.7" r="0.55"/></g><path d="M236.2 307.1H240L238.1 309.3Z" fill="#484848" stroke="none"/><path d="M278.9 307.1H282.7L280.8 309.3Z" fill="#484848" stroke="none"/></svg></div>
</div>

</body></html>
